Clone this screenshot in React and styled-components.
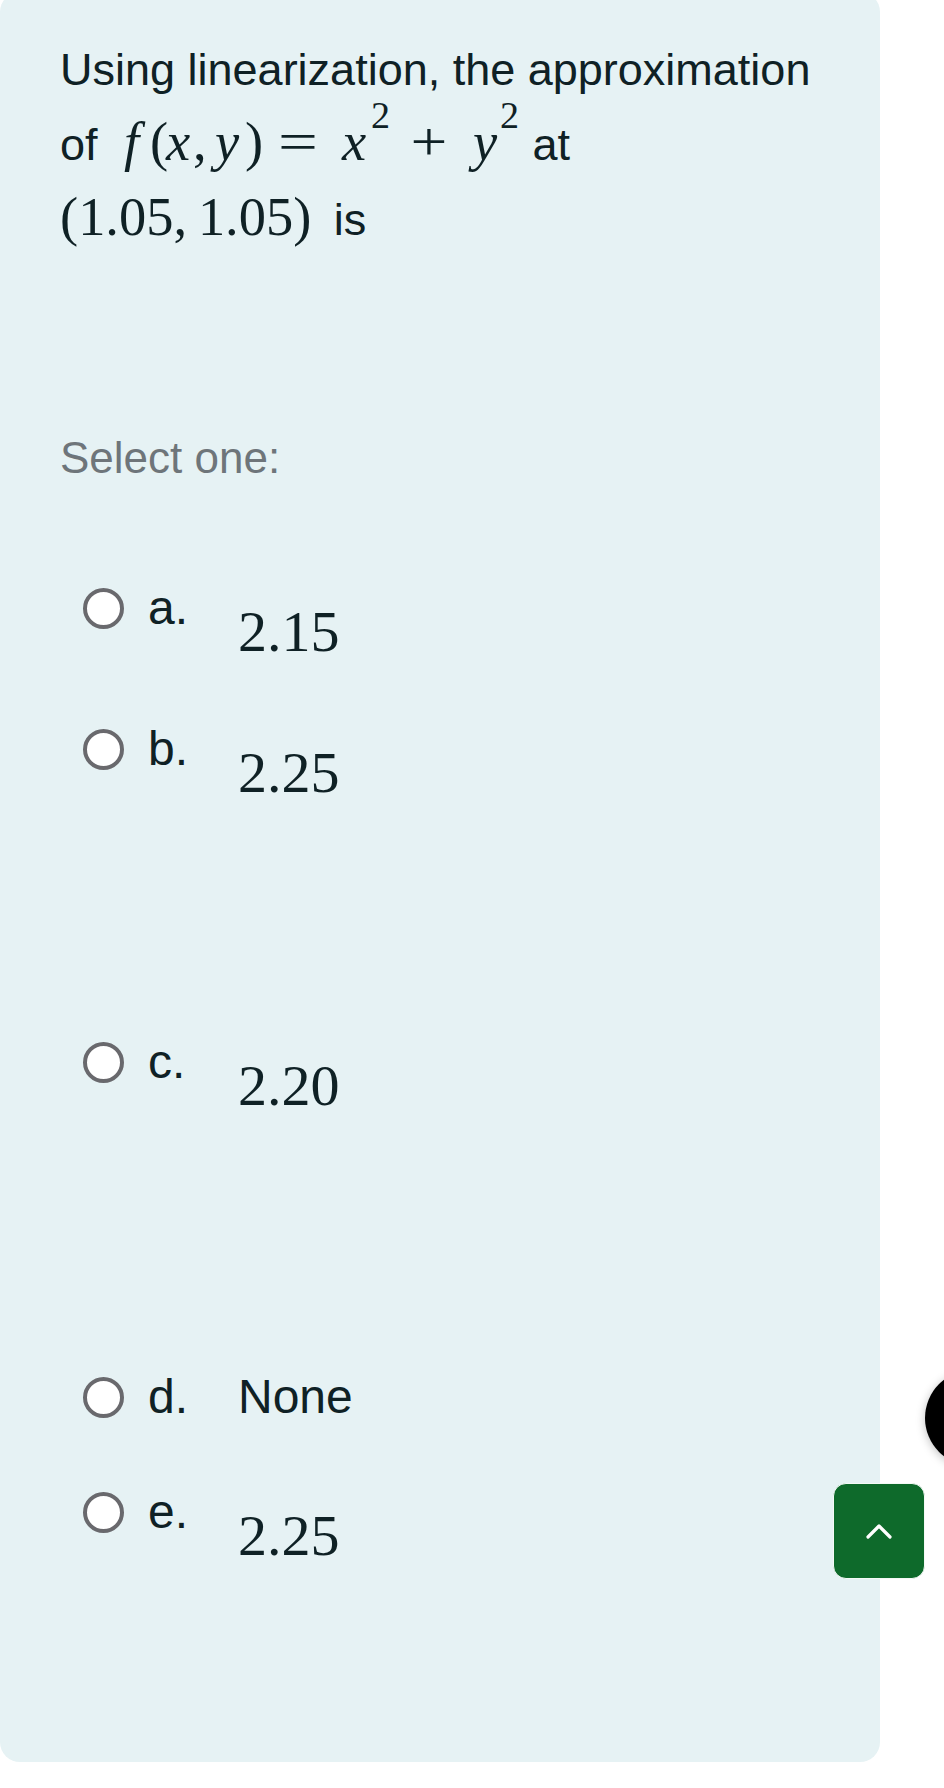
import React from "react";
import styled, { createGlobalStyle } from "styled-components";

const Global = createGlobalStyle`
  html, body { margin: 0; padding: 0; background: #ffffff; }
  body { font-family: "Liberation Sans", Arial, sans-serif; }
`;

const Page = styled.div`
  position: relative;
  width: 944px;
  height: 1788px;
  overflow: hidden;
`;

const Card = styled.section`
  width: 880px;
  height: 1770px;
  box-sizing: border-box;
  margin-top: -8px;
  padding: 42px 40px 0 60px;
  background: #e6f2f4;
  border-radius: 20px;
  color: #0f2125;
`;

const Question = styled.p`
  margin: 0;
  font-size: 45px;
  line-height: 72px;
`;

const Math = styled.span`
  font-family: "Liberation Serif", "Times New Roman", serif;
  font-size: 1.21em;
  white-space: nowrap;
  margin-left: ${(p) => p.$ml || 0}px;
  margin-right: ${(p) => p.$mr || 0}px;
`;

const Glyph = styled.span`
  display: inline-block;
  width: ${(p) => p.$w}px;
  padding-left: ${(p) => p.$pl || 0}px;
  font-style: ${(p) => (p.$it ? "italic" : "normal")};
`;

const Sup = styled.span`
  display: inline-block;
  width: ${(p) => p.$w}px;
  font-size: 0.7em;
  line-height: 0;
  vertical-align: 32px;
`;

const Rel = styled.span`
  display: inline-block;
  width: ${(p) => p.$w}px;
  margin-right: ${(p) => p.$after}px;
  text-align: center;
  transform: scaleX(${(p) => p.$sx});
`;

const Prompt = styled.div`
  margin-top: 169px;
  font-size: 44px;
  line-height: 65px;
  color: #6e757a;
`;

const Options = styled.div`
  margin-top: 84px;
  display: flex;
  flex-direction: column;
`;

const Row = styled.label`
  display: flex;
  align-items: flex-start;
  padding-left: 23px;
  padding-bottom: ${(p) => p.$extra}px;
  margin-bottom: 45px;
`;

const Radio = styled.span`
  flex-shrink: 0;
  width: 41px;
  height: 41px;
  box-sizing: border-box;
  margin-top: 14px;
  margin-right: 24px;
  border: 4px solid #69696d;
  border-radius: 50%;
  background: #ffffff;
`;

const Num = styled.span`
  flex-shrink: 0;
  width: 90px;
  font-size: 48px;
  line-height: 67px;
`;

const Answer = styled.div`
  font-size: 48px;
  line-height: 67px;
  padding-top: ${(p) => (p.$math ? 24 : 0)}px;
`;

const TopButton = styled.button`
  position: absolute;
  left: 833px;
  top: 1483px;
  width: 92px;
  height: 96px;
  box-sizing: border-box;
  border: 1.5px solid #f4faf6;
  border-radius: 13px;
  background: #0e6a2b;
  display: flex;
  align-items: center;
  justify-content: center;
  padding: 0;
`;

const Bubble = styled.div`
  position: absolute;
  left: 925px;
  top: 1370px;
  width: 96px;
  height: 96px;
  border-radius: 50%;
  background: #000000;
  box-shadow: 0 2px 10px rgba(0, 0, 0, 0.25);
`;

const options = [
  { n: "a.", v: "2.15", math: true, extra: 2 },
  { n: "b.", v: "2.25", math: true, extra: 174 },
  { n: "c.", v: "2.20", math: true, extra: 196 },
  { n: "d.", v: "None", math: false, extra: 3 },
  { n: "e.", v: "2.25", math: true, extra: 3 },
];

export default function App() {
  return (
    <Page>
      <Global />
      <Card>
        <Question>
          Using linearization, the approximation of{" "}
          <Math $ml={12}>
            <Glyph $w={26} $pl={2} $it>f</Glyph>
            <Glyph $w={16}>(</Glyph>
            <Glyph $w={27} $it>x</Glyph>
            <Glyph $w={22}>,</Glyph>
            <Glyph $w={30} $it>y</Glyph>
            <Glyph $w={33}>)</Glyph>
            <Rel $w={40} $after={24} $sx={1.3}>=</Rel>
            <Glyph $w={29} $it>x</Glyph>
            <Sup $w={41}>2</Sup>
            <Rel $w={34} $after={27} $sx={1.2}>+</Rel>
            <Glyph $w={27} $it>y</Glyph>
            <Sup $w={20}>2</Sup>
          </Math>{" "}
          at
          <br />
          <Math $mr={10}>(1.05,&thinsp;1.05)</Math> is
        </Question>
        <Prompt>Select one:</Prompt>
        <Options>
          {options.map((o) => (
            <Row key={o.n} $extra={o.extra}>
              <Radio />
              <Num>{o.n}</Num>
              <Answer $math={o.math}>{o.math ? <Math>{o.v}</Math> : o.v}</Answer>
            </Row>
          ))}
        </Options>
      </Card>
      <Bubble />
      <TopButton aria-label="Back to top">
        <svg width="30" height="18" viewBox="0 0 30 18" fill="none">
          <polyline points="4,15 15,4 26,15" stroke="#ffffff" strokeWidth="3.2" strokeLinecap="round" strokeLinejoin="round" />
        </svg>
      </TopButton>
    </Page>
  );
}
